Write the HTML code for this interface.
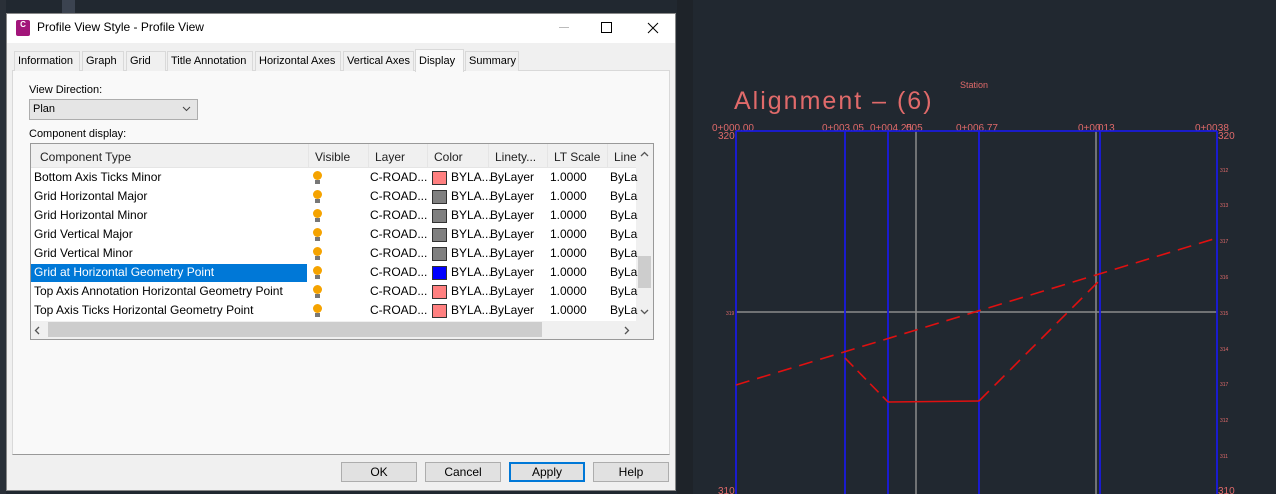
<!DOCTYPE html>
<html><head><meta charset="utf-8"><style>
*{margin:0;padding:0;box-sizing:border-box}
body{width:1276px;height:494px;overflow:hidden;background:#212830;font-family:"Liberation Sans",sans-serif;font-size:12px;color:#000;position:relative}
.a{position:absolute;white-space:nowrap}
.tab{position:absolute;top:51px;height:20px;border:1px solid #d9d9d9;border-bottom:none;background:#f0f0f0;padding:3px 0 0 3px;font-size:11px;white-space:nowrap;overflow:hidden}
.btn{position:absolute;top:462px;width:76px;height:20px;background:#e1e1e1;border:1px solid #adadad;text-align:center;line-height:18px}
.row{position:absolute;left:31px;width:605px;height:19px}
.row span{position:absolute;top:2px;white-space:nowrap}
.bulb{position:absolute;top:3px;left:282px;width:9px;height:9px;border-radius:50%;background:#f5a300}
.bulb:after{content:"";position:absolute;left:2px;top:9px;width:5px;height:4px;background:#777}
.sw{position:absolute;top:3px;left:401px;width:15px;height:14px;border:1px solid #333}
.hd{position:absolute;top:0;height:24px;border-right:1px solid #e5e5e5;padding:6px 0 0 6px;color:#222;white-space:nowrap;overflow:hidden}
.sm{font-size:11px}
</style></head><body>
<div class="a" style="left:62px;top:0;width:13px;height:13px;background:#3b4350"></div>
<div class="a" style="left:0;top:0;width:6px;height:494px;background:#2a3038"></div>
<div class="a" style="left:6px;top:13px;width:670px;height:478px;background:#f0f0f0;border:1px solid #888"></div>
<div class="a" style="left:7px;top:14px;width:668px;height:29px;background:#fff"></div>
<div class="a" style="left:16px;top:20px;width:14px;height:16px;background:#a2157a;border-radius:2px;color:#fff;font-size:8px;font-weight:bold;text-align:center;line-height:10px">C</div>
<div class="a" style="left:37px;top:20px;font-size:12px">Profile View Style - Profile View</div>
<div class="a" style="left:559px;top:27px;width:10px;height:1px;background:#bbb"></div>
<div class="a" style="left:601px;top:22px;width:11px;height:11px;border:1px solid #000"></div>
<svg class="a" style="left:647px;top:22px" width="12" height="12"><path d="M1 1L11 11M11 1L1 11" stroke="#000" stroke-width="1"/></svg>
<div class="a" style="left:12px;top:70px;width:658px;height:385px;background:#f9f9f9;border:1px solid #d9d9d9;border-bottom:1px solid #999"></div>
<div class="tab" style="left:14px;width:66px">Information</div>
<div class="tab" style="left:82px;width:42px">Graph</div>
<div class="tab" style="left:126px;width:40px">Grid</div>
<div class="tab" style="left:167px;width:86px">Title Annotation</div>
<div class="tab" style="left:255px;width:86px">Horizontal Axes</div>
<div class="tab" style="left:343px;width:71px">Vertical Axes</div>
<div class="tab" style="left:415px;width:49px;top:49px;height:23px;background:#f9f9f9;padding-top:5px">Display</div>
<div class="tab" style="left:465px;width:54px">Summary</div>
<div class="a sm" style="left:29px;top:84px">View Direction:</div>
<div class="a" style="left:29px;top:99px;width:169px;height:21px;background:#e5e5e5;border:1px solid #adadad;padding:3px 0 0 3px;font-size:11px">Plan<svg style="position:absolute;right:6px;top:6px" width="9" height="6"><path d="M1 1L4.5 4.5L8 1" stroke="#444" fill="none"/></svg></div>
<div class="a sm" style="left:29px;top:128px">Component display:</div>
<div class="a" style="left:30px;top:143px;width:624px;height:197px;background:#fff;border:1px solid #999"></div>
<div class="a" style="left:31px;top:144px;width:605px;height:24px;background:#f0f0f0;border-bottom:1px solid #e5e5e5">
<div class="hd" style="left:0;width:278px;padding-left:9px">Component Type</div>
<div class="hd" style="left:278px;width:60px">Visible</div>
<div class="hd" style="left:338px;width:59px">Layer</div>
<div class="hd" style="left:397px;width:61px">Color</div>
<div class="hd" style="left:458px;width:59px">Linety...</div>
<div class="hd" style="left:517px;width:60px">LT Scale</div>
<div class="hd" style="left:577px;width:28px;border:none">Line</div>
</div>
<div class="a" style="left:636px;top:144px;width:17px;height:177px;background:#f0f0f0"></div>
<div class="a" style="left:638px;top:256px;width:13px;height:32px;background:#cdcdcd"></div>
<svg class="a" style="left:640px;top:151px" width="9" height="6"><path d="M1 5L4.5 1.5L8 5" stroke="#555" fill="none" stroke-width="1.3"/></svg>
<svg class="a" style="left:640px;top:309px" width="9" height="6"><path d="M1 1L4.5 4.5L8 1" stroke="#555" fill="none" stroke-width="1.3"/></svg>
<div class="a" style="left:31px;top:321px;width:622px;height:18px;background:#f0f0f0"></div>
<div class="a" style="left:48px;top:322px;width:494px;height:15px;background:#cdcdcd"></div>
<svg class="a" style="left:34px;top:326px" width="6" height="9"><path d="M5 1L1.5 4.5L5 8" stroke="#555" fill="none" stroke-width="1.3"/></svg>
<svg class="a" style="left:624px;top:326px" width="6" height="9"><path d="M1 1L4.5 4.5L1 8" stroke="#555" fill="none" stroke-width="1.3"/></svg>

<div class="row" style="top:168px"><span style="left:3px">Bottom Axis Ticks Minor</span><i class="bulb"></i><span style="left:339px">C-ROAD...</span><i class="sw" style="background:#ff8080"></i><span style="left:420px">BYLA...</span><span style="left:459px">ByLayer</span><span style="left:519px">1.0000</span><span style="left:579px">ByLa</span></div>
<div class="row" style="top:187px"><span style="left:3px">Grid Horizontal Major</span><i class="bulb"></i><span style="left:339px">C-ROAD...</span><i class="sw" style="background:#808080"></i><span style="left:420px">BYLA...</span><span style="left:459px">ByLayer</span><span style="left:519px">1.0000</span><span style="left:579px">ByLa</span></div>
<div class="row" style="top:206px"><span style="left:3px">Grid Horizontal Minor</span><i class="bulb"></i><span style="left:339px">C-ROAD...</span><i class="sw" style="background:#808080"></i><span style="left:420px">BYLA...</span><span style="left:459px">ByLayer</span><span style="left:519px">1.0000</span><span style="left:579px">ByLa</span></div>
<div class="row" style="top:225px"><span style="left:3px">Grid Vertical Major</span><i class="bulb"></i><span style="left:339px">C-ROAD...</span><i class="sw" style="background:#808080"></i><span style="left:420px">BYLA...</span><span style="left:459px">ByLayer</span><span style="left:519px">1.0000</span><span style="left:579px">ByLa</span></div>
<div class="row" style="top:244px"><span style="left:3px">Grid Vertical Minor</span><i class="bulb"></i><span style="left:339px">C-ROAD...</span><i class="sw" style="background:#808080"></i><span style="left:420px">BYLA...</span><span style="left:459px">ByLayer</span><span style="left:519px">1.0000</span><span style="left:579px">ByLa</span></div>
<div class="row" style="top:263px"><span style="left:0;top:1px;width:276px;height:18px;background:#0078d7"></span><span style="left:3px;color:#fff">Grid at Horizontal Geometry Point</span><i class="bulb"></i><span style="left:339px">C-ROAD...</span><i class="sw" style="background:#0000ff"></i><span style="left:420px">BYLA...</span><span style="left:459px">ByLayer</span><span style="left:519px">1.0000</span><span style="left:579px">ByLa</span></div>
<div class="row" style="top:282px"><span style="left:3px">Top Axis Annotation Horizontal Geometry Point</span><i class="bulb"></i><span style="left:339px">C-ROAD...</span><i class="sw" style="background:#ff8080"></i><span style="left:420px">BYLA...</span><span style="left:459px">ByLayer</span><span style="left:519px">1.0000</span><span style="left:579px">ByLa</span></div>
<div class="row" style="top:301px"><span style="left:3px">Top Axis Ticks Horizontal Geometry Point</span><i class="bulb"></i><span style="left:339px">C-ROAD...</span><i class="sw" style="background:#ff8080"></i><span style="left:420px">BYLA...</span><span style="left:459px">ByLayer</span><span style="left:519px">1.0000</span><span style="left:579px">ByLa</span></div>

<div class="btn" style="left:341px">OK</div>
<div class="btn" style="left:425px">Cancel</div>
<div class="btn" style="left:509px;border:2px solid #0078d7;line-height:16px">Apply</div>
<div class="btn" style="left:593px">Help</div>

<div class="a" style="left:677px;top:0;width:16px;height:494px;background:#1e2329"></div>
<svg class="a" style="left:0;top:0" width="1276" height="494">
<g font-family="Liberation Sans,sans-serif" fill="#e06a6a">
<text x="734" y="109" font-size="25" letter-spacing="2">Alignment – (6)</text>
<text x="960" y="88" font-size="9">Station</text>
<g font-size="10"><text x="712" y="131">0+000.00</text><text x="822" y="131">0+003.05</text><text x="870" y="131">0+004.25</text><text x="906" y="131">005</text><text x="956" y="131">0+006.77</text><text x="1078" y="131">0+00</text><text x="1098" y="131">013</text><text x="1195" y="131">0+00</text><text x="1215" y="131">.38</text>
<text x="718" y="139">320</text><text x="1218" y="139">320</text><text x="718" y="494">310</text><text x="1218" y="494">310</text></g>
<g font-size="5"><text x="1220" y="172">312</text><text x="1220" y="207">313</text><text x="1220" y="243">317</text><text x="1220" y="279">316</text><text x="1220" y="315">315</text><text x="1220" y="351">314</text><text x="1220" y="386">317</text><text x="1220" y="422">312</text><text x="1220" y="458">311</text><text x="726" y="315">319</text></g>
</g>
<g stroke="#8a8a8a" stroke-width="1.5"><line x1="916" y1="131" x2="916" y2="494"/><line x1="1096" y1="131" x2="1096" y2="494"/><line x1="736" y1="312" x2="1217" y2="312"/></g>
<g stroke="#1a1ae0" stroke-width="1.8"><line x1="736" y1="131" x2="1217" y2="131"/><line x1="736" y1="131" x2="736" y2="494"/><line x1="845" y1="131" x2="845" y2="494"/><line x1="888" y1="131" x2="888" y2="494"/><line x1="979" y1="131" x2="979" y2="494"/><line x1="1100" y1="131" x2="1100" y2="494"/><line x1="1217" y1="131" x2="1217" y2="494"/></g>
<g stroke="#e01010" stroke-width="1.6" fill="none"><path d="M736 385 L1217 238" stroke-dasharray="14 8"/><path d="M845 358 L888 402" stroke-dasharray="12 6"/><path d="M888 402 L979 401"/><path d="M979 401 L1100 280" stroke-dasharray="14 8"/></g>
</svg>
</body></html>
